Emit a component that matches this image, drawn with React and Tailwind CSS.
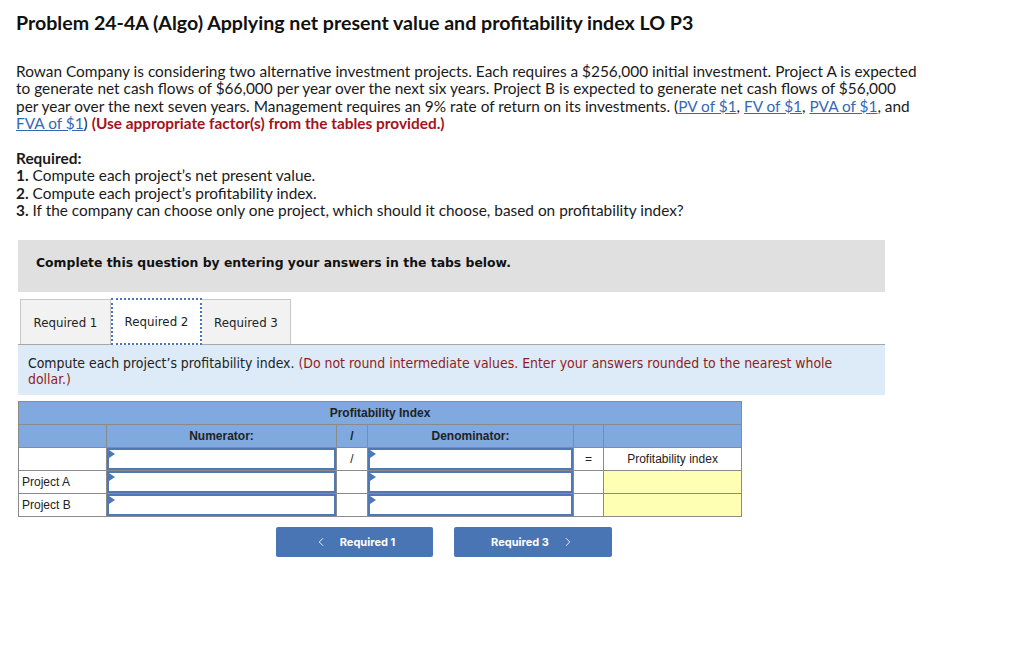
import React from 'react';
import { ChevronLeft, ChevronRight } from 'lucide-react';

const Arrow = () => (
  <span className="absolute left-0 top-0 w-0 h-0 border-t-[4px] border-b-[4px] border-l-[6px] border-t-transparent border-b-transparent border-l-[#4a78c0]" />
);

const InputCell = () => (
  <td className="p-0 border border-[#8a8a8a] h-[23px]">
    <div className="relative h-[22px] border-2 border-[#4f78b5] bg-white">
      <Arrow />
    </div>
  </td>
);

const App = () => {
  const link = 'text-[#3568b8] underline';
  return (
    <div className="bg-white min-h-screen text-[#1a1a1a]" style={{ fontFamily: 'Lato, "Open Sans", sans-serif' }}>
      <div className="pl-4 pt-[11px]">
        <h1 className="text-[19.6px] font-bold leading-[24px] text-[#111]">
          Problem 24-4A (Algo) Applying net present value and profitability index LO P3
        </h1>

        <p className="mt-[28px] text-[15.4px] leading-[17.3px] whitespace-nowrap">
          Rowan Company is considering two alternative investment projects. Each requires a $256,000 initial investment. Project A is expected<br />
          to generate net cash flows of $66,000 per year over the next six years. Project B is expected to generate net cash flows of $56,000<br />
          per year over the next seven years. Management requires an 9% rate of return on its investments. (<span className={link}>PV of $1</span>, <span className={link}>FV of $1</span>, <span className={link}>PVA of $1</span>, and<br />
          <span className={link}>FVA of $1</span>) <span className="font-bold text-[#a5131a]">(Use appropriate factor(s) from the tables provided.)</span>
        </p>

        <div className="mt-[18px] text-[15.4px] leading-[17.3px]">
          <div className="font-bold">Required:</div>
          <div><span className="font-bold">1.</span> Compute each project’s net present value.</div>
          <div><span className="font-bold">2.</span> Compute each project’s profitability index.</div>
          <div><span className="font-bold">3.</span> If the company can choose only one project, which should it choose, based on profitability index?</div>
        </div>
      </div>

      <div className="ml-[18px] w-[867px]" style={{ fontFamily: '"DejaVu Sans", Verdana, sans-serif' }}>
        <div className="mt-[21px] h-[52px] bg-[#e0e0e0] flex items-center pl-[18px] pb-[7px] text-[12.4px] font-bold text-[#111]">
          Complete this question by entering your answers in the tabs below.
        </div>

        <div className="mt-[7px] flex pl-[2px] border-b border-[#a8a8a8] h-[46px] items-end">
          <div className="h-[45px] w-[91px] flex items-center justify-center pt-[2px] bg-[#f2f2f2] border border-[#c8c8c8] border-b-0 text-[11.8px] text-[#222]">Required 1</div>
          <div className="h-[47px] -mb-px w-[91px] flex items-center justify-center pt-[2px] bg-white border-2 border-dotted border-[#4a74c0] text-[11.8px] text-[#222] relative z-10">Required 2</div>
          <div className="h-[45px] w-[89px] flex items-center justify-center pt-[2px] bg-[#f2f2f2] border border-[#c8c8c8] border-b-0 border-l-0 text-[11.8px] text-[#222]">Required 3</div>
        </div>

        <div className="h-[50px] bg-[#ddeaf7] pl-[10px] pt-[10px] text-[13.9px] leading-[16px] text-[#222]" style={{ fontFamily: '"DejaVu Sans Condensed", "DejaVu Sans", sans-serif', fontStretch: 'condensed' }}>
          Compute each project’s profitability index. <span className="text-[#8f1d1d]">(Do not round intermediate values. Enter your answers rounded to the nearest whole<br />dollar.)</span>
        </div>
      </div>

      <div className="ml-[18px] mt-[6px]" style={{ fontFamily: '"Liberation Sans", Arial, sans-serif' }}>
        <table className="border-collapse text-[12px] text-[#222] table-fixed w-[723px]">
          <colgroup>
            <col className="w-[88px]" />
            <col className="w-[230px]" />
            <col className="w-[31px]" />
            <col className="w-[206px]" />
            <col className="w-[30px]" />
            <col className="w-[138px]" />
          </colgroup>
          <tbody>
            <tr className="bg-[#80a9e0] h-[23px]">
              <td colSpan={6} className="border border-[#8a8a8a] text-center font-bold">Profitability Index</td>
            </tr>
            <tr className="bg-[#80a9e0] h-[23px] font-bold">
              <td className="border border-[#8a8a8a]" />
              <td className="border border-[#8a8a8a] text-center">Numerator:</td>
              <td className="border border-[#8a8a8a] text-center">/</td>
              <td className="border border-[#8a8a8a] text-center">Denominator:</td>
              <td className="border border-[#8a8a8a]" />
              <td className="border border-[#8a8a8a]" />
            </tr>
            <tr className="h-[23px]">
              <td className="border border-[#8a8a8a]" />
              <InputCell />
              <td className="border border-[#8a8a8a] text-center">/</td>
              <InputCell />
              <td className="border border-[#8a8a8a] text-center">=</td>
              <td className="border border-[#8a8a8a] text-center">Profitability index</td>
            </tr>
            {['Project A', 'Project B'].map((p) => (
              <tr key={p} className="h-[23px]">
                <td className="border border-[#8a8a8a] pl-[3px]">{p}</td>
                <InputCell />
                <td className="border border-[#8a8a8a]" />
                <InputCell />
                <td className="border border-[#8a8a8a]" />
                <td className="border border-[#8a8a8a] bg-[#ffffb4]" />
              </tr>
            ))}
          </tbody>
        </table>
      </div>

      <div className="mt-[10px] ml-[276px] flex gap-[21px]" style={{ fontFamily: 'Inter, "Open Sans", sans-serif' }}>
        <button className="w-[157px] h-[30px] bg-[#4a75b5] rounded-[2px] text-white text-[11px] font-bold flex items-center justify-center gap-[12px]">
          <ChevronLeft size={14} strokeWidth={1.5} />Required 1
        </button>
        <button className="w-[158px] h-[30px] bg-[#4a75b5] rounded-[2px] text-white text-[11px] font-bold flex items-center justify-center gap-[12px]">
          Required 3<ChevronRight size={14} strokeWidth={1.5} />
        </button>
      </div>
    </div>
  );
};

export default App;
